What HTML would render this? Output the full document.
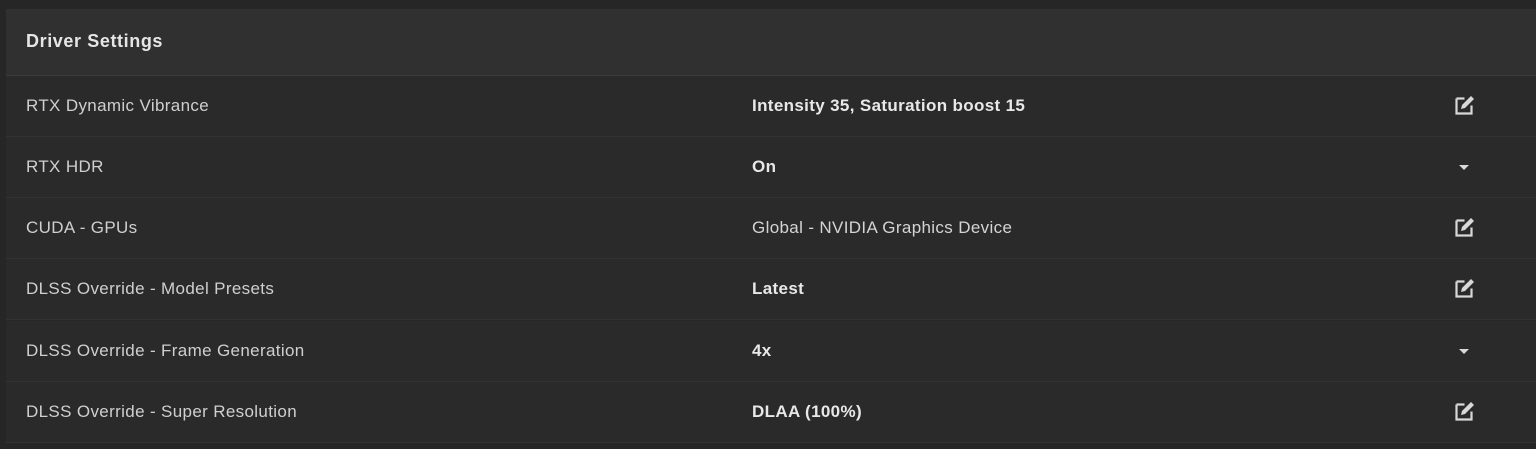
<!DOCTYPE html>
<html><head><style>
body{margin:0;width:1536px;height:449px;background:#262626;font-family:"Liberation Sans",sans-serif;overflow:hidden;position:relative}
.hdr{position:absolute;left:6px;top:9px;right:0;height:66px;background:#303030;border-bottom:1px solid #3a3a3a}
.hdr span{position:absolute;left:20px;top:22px;font-size:18px;letter-spacing:0.6px;font-weight:bold;color:#e6e6e6}
.row{position:absolute;left:6px;right:0;height:60px;background:#2a2a2a;border-bottom:1px solid #323232}
.l{position:absolute;left:20px;top:20px;font-size:17px;letter-spacing:0.35px;color:#cfcfcf}
.v{position:absolute;left:746px;top:20px;font-size:17px;letter-spacing:0.35px;color:#e8e8e8;font-weight:bold}
.v.n{font-weight:normal;color:#d4d4d4}
.ic{position:absolute;left:1446px;top:16px}
</style></head><body>
<div class="hdr"><span>Driver Settings</span></div>
<svg width="0" height="0" style="position:absolute"><defs>
<g id="e"><path d="M4.5 6.5h8M4.5 6.5v15h15v-8" fill="none" stroke="#d8d8d8" stroke-width="2.2"/><path d="M9 17l1-4 9-9 3 3-9 9z" fill="#d8d8d8"/></g>
<g id="d"><path d="M7 10h10l-5 5z" fill="#d8d8d8"/></g></defs></svg>
<div class="row" style="top:76px"><span class="l">RTX Dynamic Vibrance</span><span class="v">Intensity 35, Saturation boost 15</span><svg class="ic" width="24" height="24"><use href="#e"/></svg></div>
<div class="row" style="top:137px"><span class="l">RTX HDR</span><span class="v">On</span><svg class="ic" width="24" height="24" style="top:18px"><use href="#d"/></svg></div>
<div class="row" style="top:198px"><span class="l">CUDA - GPUs</span><span class="v n">Global - NVIDIA Graphics Device</span><svg class="ic" width="24" height="24"><use href="#e"/></svg></div>
<div class="row" style="top:259px"><span class="l">DLSS Override - Model Presets</span><span class="v">Latest</span><svg class="ic" width="24" height="24"><use href="#e"/></svg></div>
<div class="row" style="top:321px"><span class="l">DLSS Override - Frame Generation</span><span class="v">4x</span><svg class="ic" width="24" height="24" style="top:18px"><use href="#d"/></svg></div>
<div class="row" style="top:382px"><span class="l">DLSS Override - Super Resolution</span><span class="v">DLAA (100%)</span><svg class="ic" width="24" height="24"><use href="#e"/></svg></div>
</body></html>
